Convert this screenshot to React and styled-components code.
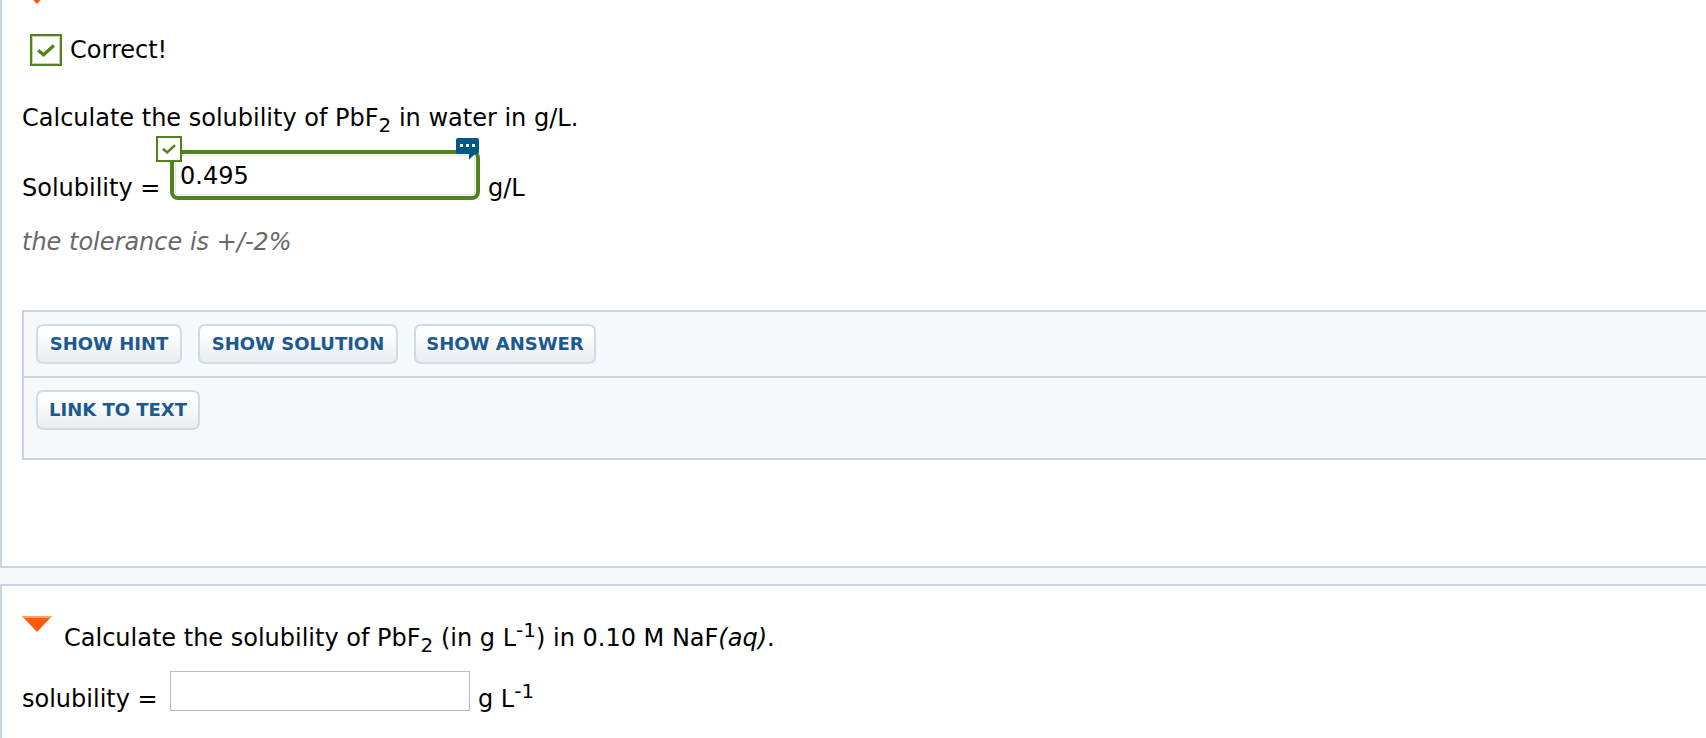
import React from "react";
import styled, { createGlobalStyle, ThemeProvider } from "styled-components";

const theme = {
    colors: {
        line: "#c9d4e0",
        tint: "#f5f9fc",
        green: "#50831b",
        blue: "#1c5991",
        note: "#005885",
        hint: "#696969",
    },
};

const GlobalStyle = createGlobalStyle`
    * {
        box-sizing: border-box;
    }

    body {
        margin: 0;
        background: ${theme.colors.tint};
        color: #000;
        font-family: Verdana, "DejaVu Sans", sans-serif;
        font-size: 24px;
        line-height: 28px;
    }
`;

const Page = styled.main`
    min-height: 100vh;
    display: flex;
    flex-direction: column;
    gap: 16px;
`;

const Part = styled.section`
    background: #fff;
    border-left: 2px solid ${({theme}) => theme.colors.line};
    padding-left: 20px;
`;

const FirstPart = styled(Part)`
    border-bottom: 2px solid ${({theme}) => theme.colors.line};
    padding-bottom: 106px;
`;

const SecondPart = styled(Part)`
    flex: 1;
    border-top: 2px solid ${({theme}) => theme.colors.line};
    padding-top: 30px;
    padding-bottom: 20px;
`;

const Arrow = styled.svg`
    display: block;
    flex: none;
`;

const Result = styled.div`
    display: flex;
    align-items: center;
    gap: 8px;
    margin: 30px 0 38px 8px;
`;

const Tick = styled.span`
    display: flex;
    align-items: center;
    justify-content: center;
    width: ${({$size}) => $size}px;
    height: ${({$size}) => $size}px;
    background: #fff;
    border: 2px solid ${({theme}) => theme.colors.green};
    color: ${({theme}) => theme.colors.green};
`;

const ResultTick = styled(Tick)`
    box-shadow: inset 0 0 0 1px #c3d5b1;
`;

const Question = styled.p`
    margin: 0;

    sub,
    sup {
        font-size: 20px;
        line-height: 0;
    }
`;

const QuestionRow = styled.div`
    display: flex;
    gap: 12px;

    ${Question} {
        padding: 8px 0 1px;
    }
`;

const Answer = styled.div`
    display: flex;
    align-items: flex-end;
    margin-top: 18px;
`;

const Label = styled.label`
    min-width: 148px;
`;

const Unit = styled.span`
    margin-left: 8px;

    sup {
        font-size: 20px;
        line-height: 0;
    }
`;

const Field = styled.div`
    position: relative;
    margin-bottom: 2px;
`;

const MarkedField = styled(Field)`
    padding: 1px;
    border: 4px solid ${({theme}) => theme.colors.green};
    border-radius: 8px;
`;

const Input = styled.input`
    display: block;
    width: 300px;
    height: 40px;
    padding: 1px 4px 0;
    border: 1px solid ${({$marked}) => ($marked ? "#e4e4e4" : "#bdbdbd")};
    background: #fff;
    color: #000;
    font: inherit;
    outline: none;
`;

const FieldTick = styled.span`
    position: absolute;
    top: -18px;
    left: -18px;
`;

const Note = styled.svg`
    position: absolute;
    top: -16px;
    right: -3px;
`;

const Tolerance = styled.p`
    margin: 26px 0 54px;
    color: ${({theme}) => theme.colors.hint};
    font-style: italic;
`;

const Help = styled.div`
    border: 2px solid ${({theme}) => theme.colors.line};
    border-right: 0;
    background: ${({theme}) => theme.colors.tint};
`;

const HelpRow = styled.div`
    display: flex;
    gap: 16px;
    padding: 12px;

    & + & {
        border-top: 2px solid ${({theme}) => theme.colors.line};
        padding-bottom: 28px;
    }
`;

const Button = styled.button`
    width: ${({$width}) => $width}px;
    height: 40px;
    padding: 0 0 2px;
    border: 2px solid #d1dbe4;
    border-radius: 7px;
    background: linear-gradient(#fff 20%, #e9edf1);
    color: ${({theme}) => theme.colors.blue};
    font: bold 18px Verdana, "DejaVu Sans", sans-serif;
    white-space: nowrap;
    cursor: pointer;
`;

const Check = ({ width }) => (
    <svg width={width} viewBox="0 0 18 13" aria-hidden="true">
        <path d="M1.2 6.2 6.6 10.8 16.8 1.5" fill="none" stroke="currentColor" strokeWidth="3.2"/>
    </svg>
);

const Triangle = () => (
    <>
        <path d="M0 0h30L15 16z" fill="#ff5a0d"/>
        <path d="M0 0h30l-2 2H2z" fill="#ffa468"/>
    </>
);

const App = () => (
    <ThemeProvider theme={theme}>
        <GlobalStyle/>
        <Page>
            <FirstPart>
                {/* only the tip of the arrow is left above the fold */}
                <Arrow width="30" height="4" viewBox="0 12 30 4" aria-hidden="true">
                    <Triangle/>
                </Arrow>
                <Result>
                    <ResultTick $size={32}><Check width={18}/></ResultTick>
                    Correct!
                </Result>
                <Question>
                    Calculate the solubility of PbF<sub>2</sub> in water in g/L.
                </Question>
                <Answer>
                    <Label htmlFor="water">Solubility =</Label>
                    <MarkedField>
                        <Input id="water" type="text" defaultValue="0.495" $marked/>
                        <FieldTick>
                            <Tick $size={26}><Check width={14}/></Tick>
                        </FieldTick>
                        <Note width="23" height="22" viewBox="0 0 23 22" aria-hidden="true">
                            <path d="M2 0h19a2 2 0 0 1 2 2v12a2 2 0 0 1-2 2h-2l-6 5.5V16H2a2 2 0 0 1-2-2V2a2 2 0 0 1 2-2z" fill={theme.colors.note}/>
                            <path d="M4 6h3v3H4zM10 6h3v3h-3zM16 6h3v3h-3z" fill="#fff"/>
                        </Note>
                    </MarkedField>
                    <Unit>g/L</Unit>
                </Answer>
                <Tolerance>the tolerance is +/-2%</Tolerance>
                <Help>
                    <HelpRow>
                        <Button type="button" $width={146}>SHOW HINT</Button>
                        <Button type="button" $width={200}>SHOW SOLUTION</Button>
                        <Button type="button" $width={182}>SHOW ANSWER</Button>
                    </HelpRow>
                    <HelpRow>
                        <Button type="button" $width={164}>LINK TO TEXT</Button>
                    </HelpRow>
                </Help>
            </FirstPart>
            <SecondPart>
                <QuestionRow>
                    <Arrow width="30" height="16" viewBox="0 0 30 16" aria-hidden="true">
                        <Triangle/>
                    </Arrow>
                    <Question>
                        Calculate the solubility of PbF<sub>2</sub> (in g L<sup>-1</sup>) in 0.10 M NaF<i>(aq)</i>.
                    </Question>
                </QuestionRow>
                <Answer>
                    <Label htmlFor="fluoride">solubility =</Label>
                    <Field>
                        <Input id="fluoride" type="text"/>
                    </Field>
                    <Unit>g L<sup>-1</sup></Unit>
                </Answer>
            </SecondPart>
        </Page>
    </ThemeProvider>
);

export default App;
